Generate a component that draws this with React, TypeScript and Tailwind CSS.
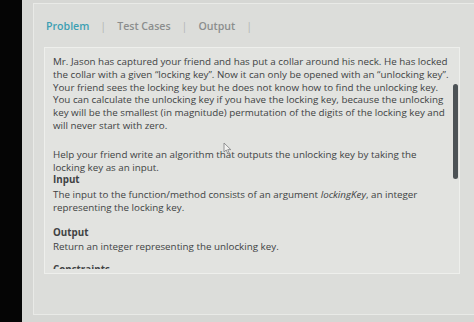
const Tab = ({ label, active }: { label: string; active?: boolean }) => (
  <div className="flex items-center">
    <span className={active ? "text-[#3c9fb3]" : "text-[#8b8d8d]"}>{label}</span>
    <span className="ml-[11px] mr-[11px] font-normal text-[#b3b5b4]">|</span>
  </div>
);

const Cursor = () => (
  <svg width="9" height="13" viewBox="0 0 9 13" className="absolute left-[178px] top-[94px]">
    <path d="M1 1 L1 10 L3.2 8 L5 12 L6.4 11.4 L4.7 7.6 L7.8 7.6 Z" fill="#f2f2f0" stroke="#7d7f80" strokeWidth="0.8" />
  </svg>
);

const intro = [
  "Mr. Jason has captured your friend and has put a collar around his neck. He has locked",
  "the collar with a given “locking key”. Now it can only be opened with an “unlocking key”.",
  "Your friend sees the locking key but he does not know how to find the unlocking key.",
  "You can calculate the unlocking key if you have the locking key, because the unlocking",
  "key will be the smallest (in magnitude) permutation of the digits of the locking key and",
  "will never start with zero.",
];

export default function App() {
  return (
    <div
      className="flex h-[322px] w-[474px] overflow-hidden bg-[#d6d7d4]"
      style={{ fontFamily: '"Open Sans", "Liberation Sans", sans-serif' }}
    >
      <div className="w-[22px] shrink-0 bg-[#050505]" />
      <div className="flex-1 pb-[7px] pl-[11px] pr-[4px] pt-[3px]">
        <div className="flex h-full flex-col border border-[#e9eae7] bg-[#dcddda] pl-[10px] pr-[18px] pt-[14px]">
          <div className="flex items-center pl-[2px] text-[10.6px] font-semibold leading-[16px]">
            <Tab label="Problem" active />
            <Tab label="Test Cases" />
            <Tab label="Output" />
          </div>
          <div className="relative mt-[13px] flex h-[227px] flex-col border border-[#eeefec] bg-[#e2e3e0] pb-[4px] text-[9.8px] leading-[12.8px] text-[#404243]">
            <div className="flex-1 overflow-hidden pl-[8px] pr-[10px] pt-[8px]">
              <p className="whitespace-nowrap">
                {intro.map((line) => (
                  <span key={line} className="block">
                    {line}
                  </span>
                ))}
              </p>
              <p className="mt-[16px]">
                Help your friend write an algorithm that outputs the unlocking key by taking the locking key as an
                input.
              </p>
              <p className="font-bold">Input</p>
              <p className="mt-[2px]">
                The input to the function/method consists of an argument <i>lockingKey</i>, an integer representing
                the locking key.
              </p>
              <p className="mt-[12px] font-bold">Output</p>
              <p className="mt-[1px]">Return an integer representing the unlocking key.</p>
              <p className="mt-[11px] font-bold">Constraints</p>
            </div>
            <div className="absolute right-[1px] top-[36px] h-[95px] w-[5px] rounded-full bg-[#4d5356]" />
            <Cursor />
          </div>
        </div>
      </div>
    </div>
  );
}
